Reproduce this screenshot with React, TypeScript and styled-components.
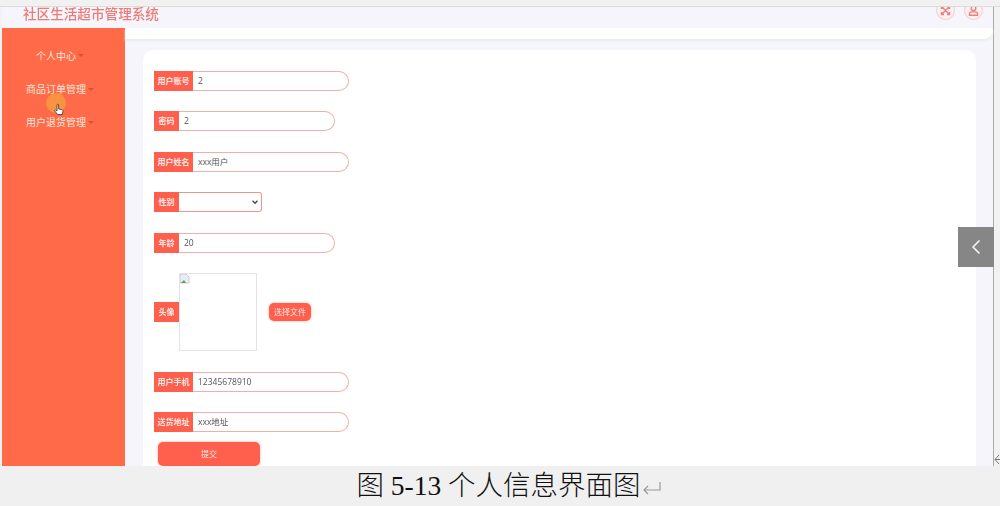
import React from "react";
import styled, { createGlobalStyle } from "styled-components";
import { ChevronLeft } from "lucide-react";

const Global = createGlobalStyle`
  html, body { margin: 0; padding: 0; background: #f0f0f0; }
  body { width: 1000px; height: 506px; overflow: hidden; font-family: "Open Sans", "Noto Sans CJK SC", sans-serif; }
  * { box-sizing: border-box; }
`;

const Page = styled.div`
  width: 1000px;
  height: 506px;
  display: flex;
  flex-direction: column;
  position: relative;
  overflow: hidden;
`;
const Chrome = styled.div`
  height: 7px;
  flex: none;
  background: #f1f1f1;
  border-bottom: 1px solid #dcdcdc;
  position: relative;
  z-index: 2;
`;
const Shot = styled.div`
  height: 459px;
  flex: none;
  display: flex;
  background: #fff;
`;
const LeftEdge = styled.div`
  width: 2px;
  flex: none;
  background: #f1f1f4;
`;
const AppArea = styled.div`
  width: 991px;
  flex: none;
  display: flex;
  flex-direction: column;
  background: #f5f5fb;
  filter: blur(0.35px);
`;
const Gutter = styled.div`
  flex: 1;
  background: #f2f2f2;
  border-left: 1px solid #a9a9a9;
  display: flex;
  align-items: flex-end;
  padding-bottom: 1px;
`;
const Header = styled.header`
  height: 21px;
  flex: none;
  display: flex;
  align-items: flex-start;
  justify-content: space-between;
  padding: 0 10px 0 21px;
`;
const Title = styled.h1`
  margin: 0;
  font: 500 13.6px/13px "Noto Sans CJK SC", sans-serif;
  color: #ee7b78;
`;
const HeaderIcons = styled.div`
  display: flex;
  gap: 9px;
  margin-top: -6px;
`;
const RoundIcon = styled.div`
  width: 19px;
  height: 19px;
  border-radius: 50%;
  background: #fdf1f1;
  border: 1px solid #f8c9c6;
  display: flex;
  align-items: center;
  justify-content: center;
`;
const Body = styled.div`
  flex: 1;
  display: flex;
  min-height: 0;
`;
const Sidebar = styled.nav`
  width: 123px;
  flex: none;
  background: #ff6b48;
  padding: 11px 7px 0 0;
  display: flex;
  flex-direction: column;
  align-items: center;
`;
const NavItem = styled.div`
  height: 33.4px;
  display: flex;
  align-items: center;
  gap: 2px;
  color: #fbe6df;
  font: 400 10px/14px "Noto Sans CJK SC", sans-serif;
`;
const Caret = styled.span`
  width: 0;
  height: 0;
  border-left: 3.5px solid transparent;
  border-right: 3.5px solid transparent;
  border-top: 3.5px solid #d9503a;
`;
const Content = styled.main`
  flex: 1;
  display: flex;
  flex-direction: column;
  min-width: 0;
`;
const TopBar = styled.div`
  height: 11px;
  flex: none;
  background: #fff;
  border-bottom-right-radius: 9px;
  box-shadow: 0 2px 2px #e9eef0;
`;
const Card = styled.section`
  flex: 1;
  margin: 11px 17px 0 18px;
  background: #fff;
  border-radius: 10px 10px 0 0;
  padding: 20.5px 0 0 11px;
  display: flex;
  flex-direction: column;
`;
const Row = styled.div`
  display: flex;
  align-items: center;
  margin-bottom: 20.5px;
`;
const Label = styled.label<{ $wide?: boolean }>`
  width: ${(p) => (p.$wide ? 39 : 25)}px;
  height: 20px;
  flex: none;
  background: #ff5f4d;
  color: #fde7e2;
  font: 700 8px/20px "Noto Sans CJK SC", sans-serif;
  text-align: center;
`;
const Field = styled.div`
  width: 156px;
  height: 20px;
  border: 1px solid #f0b0a8;
  border-left: none;
  border-radius: 0 10px 10px 0;
  padding-left: 5px;
  font: 400 8.5px/18px "Open Sans", "Noto Sans CJK SC", sans-serif;
  color: #555;
  background: #fff;
`;
const Select = styled.div`
  width: 83px;
  height: 20px;
  border: 1px solid #e9978e;
  border-left: none;
  border-radius: 0 3px 3px 0;
  display: flex;
  align-items: center;
  justify-content: flex-end;
  padding-right: 2px;
`;
const AvatarBox = styled.div`
  width: 78px;
  height: 78px;
  flex: none;
  border: 1px solid #e3e3e3;
`;
const FileButton = styled.button`
  margin-left: 12px;
  width: 42px;
  height: 18px;
  padding: 0;
  border: none;
  border-radius: 5px;
  background: #ff5f4d;
  box-shadow: 0 0 3px #ffb4a8;
  color: #fde7e2;
  font: 400 8px/18px "Noto Sans CJK SC", sans-serif;
`;
const SubmitButton = styled.button`
  margin: -10.5px 0 0 4px;
  width: 102px;
  height: 24px;
  padding: 0;
  border: none;
  border-radius: 5px;
  background: #ff5f4d;
  box-shadow: 0 0 3px #ffb4a8;
  color: #fde7e2;
  font: 400 8px/24px "Noto Sans CJK SC", sans-serif;
`;
const SideTab = styled.div`
  position: absolute;
  left: 958px;
  top: 227px;
  width: 36px;
  height: 40px;
  background: #868686;
  display: flex;
  align-items: center;
  justify-content: center;
`;
const CursorWrap = styled.div`
  position: absolute;
  left: 46px;
  top: 93px;
  width: 20px;
  height: 20px;
  border-radius: 50%;
  background: #fb9240;
`;
const HandIcon = styled.svg`
  overflow: visible;
  display: block;
`;
const Caption = styled.div`
  flex: 1;
  display: flex;
  justify-content: center;
  align-items: center;
  padding: 0 0 0 18px;
  font: 300 27.5px/40px "Liberation Serif", "Noto Sans CJK SC", serif;
  color: #111;
  background: #f0f0f0;
  position: relative;
  z-index: 1;
`;
const ReturnMark = styled.svg`
  width: 20px;
  height: 16px;
  margin: 4px 0 0 1px;
`;

const Ic = ({ children }: { children: React.ReactNode }) => (
  <svg width="13" height="13" viewBox="0 0 13 13" fill="none" stroke="#ee7f7a" strokeWidth="1.4">
    {children}
  </svg>
);

export default function App() {
  return (
    <Page>
      <Global />
      <Chrome />
      <Shot>
        <LeftEdge />
        <AppArea>
          <Header>
            <Title>社区生活超市管理系统</Title>
            <HeaderIcons>
              <RoundIcon>
                <Ic>
                  <path d="M3 3l7 7M10 3l-7 7M2.5 5V2.5H5M8 2.5h2.5V5M2.5 8v2.5H5M8 10.5h2.5V8" />
                </Ic>
              </RoundIcon>
              <RoundIcon>
                <Ic>
                  <circle cx="6.5" cy="4.2" r="2.3" />
                  <path d="M2.5 11.2v-1.4c0-1.2 1-1.9 2.2-1.9h3.6c1.2 0 2.2.7 2.2 1.9v1.4z" />
                </Ic>
              </RoundIcon>
            </HeaderIcons>
          </Header>
          <Body>
            <Sidebar>
              <NavItem>个人中心<Caret /></NavItem>
              <NavItem>商品订单管理<Caret /></NavItem>
              <NavItem>用户退货管理<Caret /></NavItem>
            </Sidebar>
            <Content>
              <TopBar />
              <Card>
                <Row>
                  <Label $wide>用户账号</Label>
                  <Field>2</Field>
                </Row>
                <Row>
                  <Label>密码</Label>
                  <Field>2</Field>
                </Row>
                <Row>
                  <Label $wide>用户姓名</Label>
                  <Field>xxx用户</Field>
                </Row>
                <Row>
                  <Label>性别</Label>
                  <Select>
                    <svg width="8" height="8" viewBox="0 0 8 8" fill="none" stroke="#444" strokeWidth="1.3">
                      <path d="M1.5 2.8 4 5.3l2.5-2.5" />
                    </svg>
                  </Select>
                </Row>
                <Row>
                  <Label>年龄</Label>
                  <Field>20</Field>
                </Row>
                <Row>
                  <Label>头像</Label>
                  <AvatarBox>
                    <svg width="10" height="10" viewBox="0 0 10 10" display="block">
                      <path d="M0 0h6l3 3v6H0z" fill="#e8edf5" stroke="#b5b9c4" strokeWidth=".7" />
                      <path d="M1 9l3-3 2 3z" fill="#5da34a" />
                    </svg>
                  </AvatarBox>
                  <FileButton type="button">选择文件</FileButton>
                </Row>
                <Row>
                  <Label $wide>用户手机</Label>
                  <Field>12345678910</Field>
                </Row>
                <Row>
                  <Label $wide>送货地址</Label>
                  <Field>xxx地址</Field>
                </Row>
                <SubmitButton type="button">提交</SubmitButton>
              </Card>
            </Content>
          </Body>
        </AppArea>
        <Gutter>
          <svg width="7" height="11" viewBox="0 0 7 11" fill="none" stroke="#777" strokeWidth="1">
            <path d="M5 1 1 5.5 5 10M1 5.5h6" />
          </svg>
        </Gutter>
      </Shot>
      <Caption>
        图 5-13 个人信息界面图
        <ReturnMark viewBox="0 0 20 16" fill="none" stroke="#9a9a9a" strokeWidth="1.2">
          <path d="M18 2v8H2M6 6l-4 4 4 4" />
        </ReturnMark>
      </Caption>
      <SideTab>
        <ChevronLeft size={24} color="#f4f4f4" strokeWidth={1.7} />
      </SideTab>
      <CursorWrap>
        <HandIcon width="20" height="20" viewBox="0 0 20 20">
          <path
            transform="translate(2 4.5)"
            d="M9 7.5c0-1 1.6-1 1.6 0v4l3.2.6c.9.2 1.2.8 1.1 1.6l-.6 3.3h-4.6l-3-3.6c-.5-.8.5-1.4 1.2-.8l1.1 1z"
            fill="#fff"
            stroke="#333"
            strokeWidth=".8"
          />
        </HandIcon>
      </CursorWrap>
    </Page>
  );
}
